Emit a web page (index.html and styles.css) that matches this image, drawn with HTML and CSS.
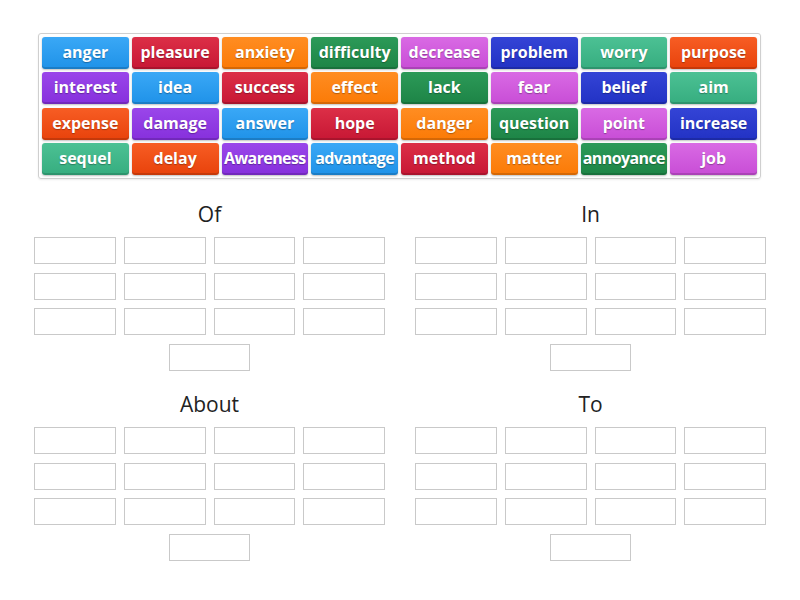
FILE: index.html
```html
<!DOCTYPE html>
<html lang="en">
<head>
  <meta charset="UTF-8">
  <title>Group sort</title>
  <link rel="stylesheet" href="styles.css">
</head>
<body>
  <div class="bank">
    <div class="tile blue">anger</div>
    <div class="tile red">pleasure</div>
    <div class="tile orange">anxiety</div>
    <div class="tile green">difficulty</div>
    <div class="tile pink">decrease</div>
    <div class="tile navy">problem</div>
    <div class="tile teal">worry</div>
    <div class="tile vermilion">purpose</div>

    <div class="tile purple">interest</div>
    <div class="tile blue">idea</div>
    <div class="tile red">success</div>
    <div class="tile orange">effect</div>
    <div class="tile green">lack</div>
    <div class="tile pink">fear</div>
    <div class="tile navy">belief</div>
    <div class="tile teal">aim</div>

    <div class="tile vermilion">expense</div>
    <div class="tile purple">damage</div>
    <div class="tile blue">answer</div>
    <div class="tile red">hope</div>
    <div class="tile orange">danger</div>
    <div class="tile green">question</div>
    <div class="tile pink">point</div>
    <div class="tile navy">increase</div>

    <div class="tile teal">sequel</div>
    <div class="tile vermilion">delay</div>
    <div class="tile purple long">Awareness</div>
    <div class="tile blue long">advantage</div>
    <div class="tile red">method</div>
    <div class="tile orange">matter</div>
    <div class="tile green long">annoyance</div>
    <div class="tile pink">job</div>
  </div>

  <div class="groups">
    <div class="group">
      <h2 class="group-title">Of</h2>
      <div class="slots">
        <div class="slot"></div><div class="slot"></div><div class="slot"></div><div class="slot"></div>
        <div class="slot"></div><div class="slot"></div><div class="slot"></div><div class="slot"></div>
        <div class="slot"></div><div class="slot"></div><div class="slot"></div><div class="slot"></div>
        <div class="slot"></div>
      </div>
    </div>
    <div class="group">
      <h2 class="group-title">In</h2>
      <div class="slots">
        <div class="slot"></div><div class="slot"></div><div class="slot"></div><div class="slot"></div>
        <div class="slot"></div><div class="slot"></div><div class="slot"></div><div class="slot"></div>
        <div class="slot"></div><div class="slot"></div><div class="slot"></div><div class="slot"></div>
        <div class="slot"></div>
      </div>
    </div>
    <div class="group">
      <h2 class="group-title">About</h2>
      <div class="slots">
        <div class="slot"></div><div class="slot"></div><div class="slot"></div><div class="slot"></div>
        <div class="slot"></div><div class="slot"></div><div class="slot"></div><div class="slot"></div>
        <div class="slot"></div><div class="slot"></div><div class="slot"></div><div class="slot"></div>
        <div class="slot"></div>
      </div>
    </div>
    <div class="group">
      <h2 class="group-title">To</h2>
      <div class="slots">
        <div class="slot"></div><div class="slot"></div><div class="slot"></div><div class="slot"></div>
        <div class="slot"></div><div class="slot"></div><div class="slot"></div><div class="slot"></div>
        <div class="slot"></div><div class="slot"></div><div class="slot"></div><div class="slot"></div>
        <div class="slot"></div>
      </div>
    </div>
  </div>
</body>
</html>
```

FILE: styles.css
```css
body {
  margin: 0;
  background: #fff;
  font-family: "Open Sans", "Liberation Sans", sans-serif;
  color: #222;
}

/* word bank */
.bank {
  box-sizing: border-box;
  width: 723px;
  margin: 33px 0 0 38px;
  padding: 3px;
  border: 1px solid #cfcfcf;
  border-radius: 3px;
  box-shadow: 0 1px 2px rgba(0, 0, 0, .08);
  display: grid;
  grid-template-columns: repeat(8, 1fr);
  grid-auto-rows: 32px;
  gap: 3.4px 3px;
}

.tile {
  border-radius: 3px;
  color: #fff;
  font-size: 16px;
  font-weight: 700;
  line-height: 31px;
  text-align: center;
  white-space: nowrap;
  overflow: hidden;
  text-shadow: 0 1px 1px rgba(0, 0, 0, .3);
  box-shadow: inset 0 -2px 0 rgba(0, 0, 0, .15), 0 1px 2px rgba(0, 0, 0, .25);
}

/* long words are squeezed to fit the tile */
.tile.long {
  letter-spacing: -0.6px;
}

.blue { background: linear-gradient(#3aa8f6, #1f92e8); }
.red { background: linear-gradient(#dc2f47, #c71734); }
.orange { background: linear-gradient(#ff8d22, #fb7a06); }
.green { background: linear-gradient(#2c9a58, #1d8446); }
.pink { background: linear-gradient(#d96ae4, #c84dd6); }
.navy { background: linear-gradient(#3444d6, #2232c4); }
.teal { background: linear-gradient(#4cc194, #36ad7f); }
.vermilion { background: linear-gradient(#f75d24, #e8420b); }
.purple { background: linear-gradient(#9a46ea, #8630dc); }

/* drop groups */
.groups {
  width: 732px;
  margin: 19px 0 0 34px;
  display: grid;
  grid-template-columns: 1fr 1fr;
  column-gap: 30px;
  row-gap: 17.5px;
}

.group-title {
  margin: 0 0 9.5px;
  padding-top: 1.5px;
  font-size: 21px;
  font-weight: 400;
  line-height: 28px;
  text-align: center;
  color: #222;
}

.slots {
  display: flex;
  flex-wrap: wrap;
  justify-content: center;
  gap: 8.5px 8px;
}

.slot {
  box-sizing: border-box;
  width: calc((100% - 24px) / 4);
  height: 27px;
  border: 1px solid #c9c9c9;
  background: #fff;
}
```
